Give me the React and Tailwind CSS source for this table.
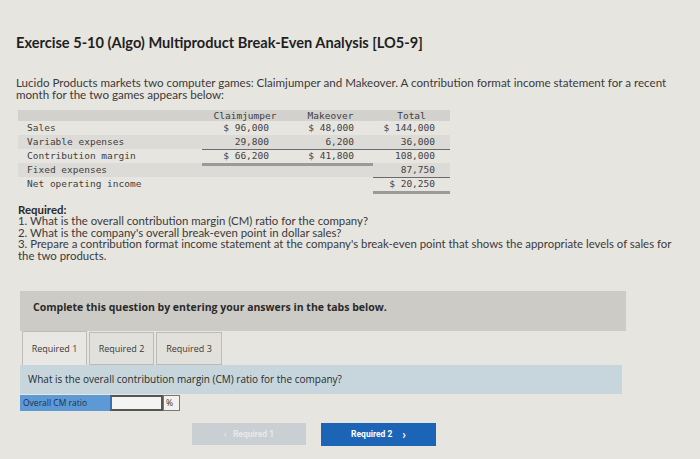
import React from "react";

const rows = [
  { label: "Sales", c: "$ 96,000", m: "$ 48,000", t: "$ 144,000" },
  { label: "Variable expenses", c: "29,800", m: "6,200", t: "36,000", line: "thin-all" },
  { label: "Contribution margin", c: "$ 66,200", m: "$ 41,800", t: "108,000", line: "thick-cm" },
  { label: "Fixed expenses", c: "", m: "", t: "87,750", line: "thin-t" },
  { label: "Net operating income", c: "", m: "", t: "$ 20,250", line: "thick-t" },
];

const IncomeTable = () => (
  <div className="ml-[2px] w-[432px] font-['DejaVu_Sans_Mono',monospace] text-[9.5px] text-[#404040]">
    <div className="grid grid-cols-[184px_86px_85px_77px] h-[11px] leading-[11px] bg-[#d2d1ce]">
      <div></div>
      <div className="text-center">Claimjumper</div>
      <div className="text-center">Makeover</div>
      <div className="text-center">Total</div>
    </div>
    {rows.map((r, i) => (
      <div
        key={r.label}
        className={`grid grid-cols-[184px_86px_85px_77px] h-[14px] leading-[14px] ${
          i % 2 === 1 ? "bg-[#dddbd7]" : ""
        }`}
      >
        <div className="pl-[9px]">{r.label}</div>
        <div
          className={`text-right pr-[19px] ${
            r.line === "thin-all"
              ? "border-b border-[#6b6b6b]"
              : r.line === "thick-cm"
              ? "border-b-[3px] border-[#9a9a98]"
              : ""
          }`}
        >
          {r.c}
        </div>
        <div
          className={`text-right pr-[19px] ${
            r.line === "thin-all"
              ? "border-b border-[#6b6b6b]"
              : r.line === "thick-cm"
              ? "border-b-[3px] border-[#9a9a98]"
              : ""
          }`}
        >
          {r.m}
        </div>
        <div
          className={`text-right pr-[15px] ${
            r.line === "thin-all" || r.line === "thin-t"
              ? "border-b border-[#6b6b6b]"
              : r.line === "thick-t"
              ? "border-b-[3px] border-[#9a9a98]"
              : ""
          }`}
        >
          {r.t}
        </div>
      </div>
    ))}
  </div>
);

const App = () => {
  return (
    <div className="w-[700px] h-[459px] overflow-hidden bg-[#e7e5e0] font-['Lato',sans-serif] text-[#3a3a3a]">
      <div className="pt-[34px] pl-4">
        <h1 className="text-[14.6px] leading-[18px] font-bold text-[#1f1f1f]">
          Exercise 5-10 (Algo) Multiproduct Break-Even Analysis [LO5-9]
        </h1>
        <p className="mt-[25px] text-[11.6px] leading-[11.5px] whitespace-nowrap">
          Lucido Products markets two computer games: Claimjumper and Makeover. A contribution format income statement for a recent
          <br />
          month for the two games appears below:
        </p>
        <div className="mt-[10px]">
          <IncomeTable />
        </div>
        <p className="mt-[13px] ml-[2px] text-[11.4px] leading-[11.4px] whitespace-nowrap">
          <span className="font-bold text-[#2a2a2a]">Required:</span>
          <br />
          1. What is the overall contribution margin (CM) ratio for the company?
          <br />
          2. What is the company's overall break-even point in dollar sales?
          <br />
          3. Prepare a contribution format income statement at the company's break-even point that shows the appropriate levels of sales for
          <br />
          the two products.
        </p>

        <div className="mt-[30px] ml-1 w-[606px] h-[40px] bg-[#cdcbc6] pl-[13px] pt-[9px] font-['Open_Sans',sans-serif] text-[10.5px] font-bold text-[#2a2a2a]">
          Complete this question by entering your answers in the tabs below.
        </div>

        <div className="ml-[6px] flex gap-[2px] font-['Open_Sans',sans-serif] text-[9px] text-[#3a3a3a]">
          <div className="w-[65px] h-[34px] border border-b-0 border-[#bdbbb7] bg-[#e9e7e3] flex items-center justify-center">
            Required 1
          </div>
          <div className="w-[65px] h-[33px] mt-[1px] border border-[#bdbbb7] bg-[#e2e0db] flex items-center justify-center">
            Required 2
          </div>
          <div className="w-[66px] h-[33px] mt-[1px] border border-[#bdbbb7] bg-[#e2e0db] flex items-center justify-center">
            Required 3
          </div>
        </div>

        <div className="ml-1 w-[602px] h-[29px] bg-[#c6d6dc] pl-[8px] pt-[7px] font-['Open_Sans',sans-serif] text-[10px] text-[#2a2a2a]">
          What is the overall contribution margin (CM) ratio for the company?
        </div>

        <div className="ml-1 mt-[1px] flex h-[16px] font-['Open_Sans',sans-serif] text-[8.5px]">
          <div className="w-[90px] bg-[#5d9ad5] pl-[3px] leading-[16px] text-[#1d2f4a]">Overall CM ratio</div>
          <div className="w-[53px] border-2 border-[#555] border-l-[#3f6fa8] bg-[#f4f4f2]"></div>
          <div className="w-[17px] border border-[#777] bg-[#f2f1ee] pl-[2px] leading-[14px] text-[#333]">%</div>
        </div>

        <div className="mt-[12px] ml-[176px] flex gap-[15px] font-['Roboto',sans-serif] text-[8.5px] font-bold">
          <div className="w-[114px] h-[22px] bg-[#c9cfd3] flex items-center justify-center gap-[6px] text-[#e6e9ec]">
            <span className="text-[10px] font-normal">‹</span>
            <span>Required 1</span>
          </div>
          <div className="w-[115px] h-[23px] bg-[#1c64b6] flex items-center justify-center gap-[10px] text-white">
            <span>Required 2</span>
            <span className="text-[12px]">›</span>
          </div>
        </div>
      </div>
    </div>
  );
};

export default App;
